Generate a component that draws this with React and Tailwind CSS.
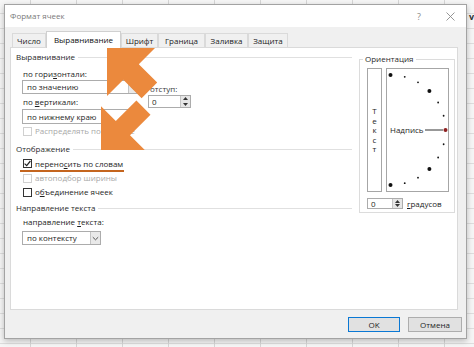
import React from 'react';

const dots = [90, 75, 60, 45, 30, 15, 0, -15, -30, -45, -60, -75, -90];

function Chevron() {
  return (
    <svg width="7" height="5" viewBox="0 0 7 5">
      <path d="M0.8 1.2 L3.5 3.8 L6.2 1.2" fill="none" stroke="#555" strokeWidth="1" />
    </svg>
  );
}

function Select({ value, className }) {
  return (
    <div className={`flex items-stretch border border-[#acacac] bg-white ${className}`}>
      <div className="flex-1 flex items-center pl-[4px] text-[#1e1e1e]">{value}</div>
      <div className="w-[10px] flex items-center justify-center border-l border-[#c4c4c4] bg-[#e9e9e9]">
        <Chevron />
      </div>
    </div>
  );
}

function Spin({ className }) {
  return (
    <div className={`flex border border-[#acacac] bg-white ${className}`}>
      <div className="flex-1 flex items-center pl-[3px] text-[#1e1e1e]">0</div>
      <div className="w-[10px] flex flex-col border-l border-[#c4c4c4] bg-[#e6e6e6]">
        <div className="flex-1 flex items-center justify-center">
          <svg width="5" height="3" viewBox="0 0 5 3"><path d="M0 3 L2.5 0 L5 3Z" fill="#333" /></svg>
        </div>
        <div className="flex-1 flex items-center justify-center">
          <svg width="5" height="3" viewBox="0 0 5 3"><path d="M0 0 L2.5 3 L5 0Z" fill="#333" /></svg>
        </div>
      </div>
    </div>
  );
}

function Check({ checked, disabled, children }) {
  return (
    <div className="flex items-center gap-[3px]">
      <div
        className={`w-[9px] h-[9px] border bg-white flex items-center justify-center ${
          disabled ? 'border-[#d0d0d0]' : 'border-[#333333]'
        }`}
      >
        {checked && (
          <svg width="7" height="7" viewBox="0 0 7 7">
            <path d="M0.6 3.6 L2.7 5.6 L6.4 1" fill="none" stroke="#222" strokeWidth="1.2" />
          </svg>
        )}
      </div>
      <span className={disabled ? 'text-[#a8a8a8]' : 'text-[#1e1e1e]'}>{children}</span>
    </div>
  );
}

function Group({ title }) {
  return (
    <div className="flex items-center h-[12px] gap-[3px]">
      <span className="text-[#2b2b2b]">{title}</span>
      <div className="flex-1 h-px bg-[#e0e0e0]" />
    </div>
  );
}

function Tab({ label, className }) {
  return (
    <div
      className={`h-[14px] flex items-center justify-center border border-b-0 border-[#dadada] text-[#1e1e1e] ${className}`}
    >
      {label}
    </div>
  );
}

function Dial() {
  const cx = 3.5;
  const cy = 61;
  const r = 55;
  return (
    <svg width="61" height="122" viewBox="0 0 61 122">
      {dots.map((a) => {
        const x = cx + r * Math.cos((a * Math.PI) / 180);
        const y = cy - r * Math.sin((a * Math.PI) / 180);
        if (a === 0) return <circle key={a} cx={x} cy={y} r="2" fill="#8e2020" />;
        const big = a % 45 === 0;
        return <circle key={a} cx={x} cy={y} r={big ? 2 : 0.9} fill="#111" />;
      })}
      <line x1="38" y1="61" x2="56" y2="61" stroke="#333" strokeWidth="1" />
      <text x="3" y="64" fontSize="8" fill="#1e1e1e" fontFamily="Open Sans, sans-serif">
        Надпись
      </text>
    </svg>
  );
}

export default function App() {
  return (
    <div className="relative w-[474px] h-[347px] overflow-hidden flex items-start bg-[#f6f6f6] bg-[linear-gradient(to_right,#d6d6d6_1px,transparent_1px),linear-gradient(to_bottom,#dedede_1px,transparent_1px)] bg-size-[46px_15px] bg-position-[30px_13px] font-['Open_Sans',sans-serif] text-[8px] leading-none">
      <div className="ml-[4px] mt-[4px] w-[463px] h-[335px] shrink-0 flex flex-col border border-[#a3a3a3] bg-[#f0f0f0] shadow-[0_2px_6px_rgba(0,0,0,0.25)]">
        {/* title bar */}
        <div className="h-[22px] bg-white flex items-center pl-[5px] text-[#7a7a7a]">
          <span>Формат ячеек</span>
          <span className="ml-auto text-[#8a8a8a] text-[9px]">?</span>
          <div className="ml-[25px] mr-[11px]">
            <svg width="9" height="9" viewBox="0 0 9 9">
              <path d="M0.5 0.5 L8.5 8.5 M8.5 0.5 L0.5 8.5" stroke="#8a8a8a" strokeWidth="0.9" />
            </svg>
          </div>
        </div>

        {/* tabs */}
        <div className="h-[20px] flex items-end pl-[7px]">
          <Tab label="Число" className="w-[34px]" />
          <div className="relative z-10 -mb-px h-[17px] w-[75px] flex items-center justify-center bg-white border border-b-0 border-[#d0d0d0] text-[#111]">
            Выравнивание
          </div>
          <Tab label="Шрифт" className="w-[37px]" />
          <Tab label="Граница" className="w-[47px]" />
          <Tab label="Заливка" className="w-[43px]" />
          <Tab label="Защита" className="w-[40px] border-[#bdbdbd]" />
        </div>

        {/* panel */}
        <div className="ml-[5px] w-[448px] h-[263px] border border-[#dadada] bg-white flex items-start">
          <div className="w-[336px] ml-[5px] flex flex-col">
            <div className="mt-[3px]">
              <Group title="Выравнивание" />
            </div>
            <div className="flex mt-[5px]">
              <div className="flex flex-col pl-[7px]">
                <div className="h-[12px] flex items-center text-[#1e1e1e]">
                  <span>
                    по гори<span className="underline">з</span>онтали:
                  </span>
                </div>
                <Select className="w-[117px] h-[14px] -ml-px" value="по значению" />
                <div className="h-[12px] mt-[2px] flex items-center text-[#1e1e1e]">
                  <span>
                    по <span className="underline">в</span>ертикали:
                  </span>
                </div>
                <Select className="w-[117px] h-[15px] mt-px -ml-px" value="по нижнему краю" />
              </div>
              <div className="flex flex-col ml-[9px] pt-[15px]">
                <div className="h-[12px] flex items-center pl-[2px] text-[#3a3a3a]">отступ:</div>
                <Spin className="w-[43px] h-[13px]" />
              </div>
            </div>
            <div className="mt-px pl-[7px] h-[12px] flex items-center">
              <Check disabled>Распределять по ширине</Check>
            </div>
            <div className="mt-[6px]">
              <Group title="Отображение" />
            </div>
            <div className="mt-[2px] ml-[4px] self-start h-[15px] border-b-2 border-[#c4651f] pl-[3px] pr-px flex items-center">
              <Check checked>
                перено<span className="underline">с</span>ить по словам
              </Check>
            </div>
            <div className="h-[12px] pl-[7px] flex items-center">
              <Check disabled>автоподбор ширины</Check>
            </div>
            <div className="mt-[2px] h-[12px] pl-[7px] flex items-center">
              <Check>
                о<span className="underline">б</span>ъединение ячеек
              </Check>
            </div>
            <div className="mt-[4px]">
              <Group title="Направление текста" />
            </div>
            <div className="mt-[2px] h-[12px] pl-[7px] flex items-center text-[#1e1e1e]">
              <span>
                направление <span className="underline">т</span>екста:
              </span>
            </div>
            <Select className="mt-[3px] ml-[6px] w-[79px] h-[14px]" value="по контексту" />
          </div>

          {/* orientation */}
          <div className="ml-[7px] mt-[11px] w-[96px] h-[154px] border border-[#dcdcdc] flex flex-col">
            <div className="-mt-[7px] ml-[3px] self-start bg-white px-[2px] h-[12px] flex items-center text-[#2b2b2b]">
              Ориентация
            </div>
            <div className="flex mt-[3px] ml-[7px] gap-[4px]">
              <div className="w-[15px] h-[124px] border border-[#a6a6a6] flex flex-col items-center justify-center leading-[9.5px] text-[#1e1e1e]">
                <span>Т</span>
                <span>е</span>
                <span>к</span>
                <span>с</span>
                <span>т</span>
              </div>
              <div className="w-[63px] h-[124px] border border-[#a6a6a6]">
                <Dial />
              </div>
            </div>
            <div className="flex items-center mt-[6px] ml-[7px]">
              <Spin className="w-[36px] h-[11px]" />
              <span className="ml-[4px] text-[#1e1e1e]">
                <span className="underline">г</span>радусов
              </span>
            </div>
          </div>
        </div>

        {/* buttons */}
        <div className="flex justify-end gap-[8px] pt-[7px] pr-[4px]">
          <div className="w-[52px] h-[15px] flex items-center justify-center bg-[#e1e1e1] border-[1.5px] border-[#0a78d4] text-[#1e1e1e]">
            OK
          </div>
          <div className="w-[54px] h-[15px] flex items-center justify-center bg-[#e1e1e1] border border-[#adadad] text-[#1e1e1e]">
            Отмена
          </div>
        </div>
      </div>

      <div className="pt-[12px] pl-[2px] text-[9px] font-bold text-[#333] whitespace-nowrap">vi</div>

      {/* annotation arrows */}
      <svg className="absolute inset-0 pointer-events-none" width="474" height="347" viewBox="0 0 474 347">
        <polygon
          points="107,48 155,48 138.8,64.3 157.2,82.6 141.6,98.2 123.3,79.8 107,96"
          fill="#eb893d"
        />
        <polygon
          points="101,150 144.8,150 130,135.2 150.5,114.7 136.4,100.5 115.8,121 101,106.2"
          fill="#eb893d"
        />
      </svg>
    </div>
  );
}
